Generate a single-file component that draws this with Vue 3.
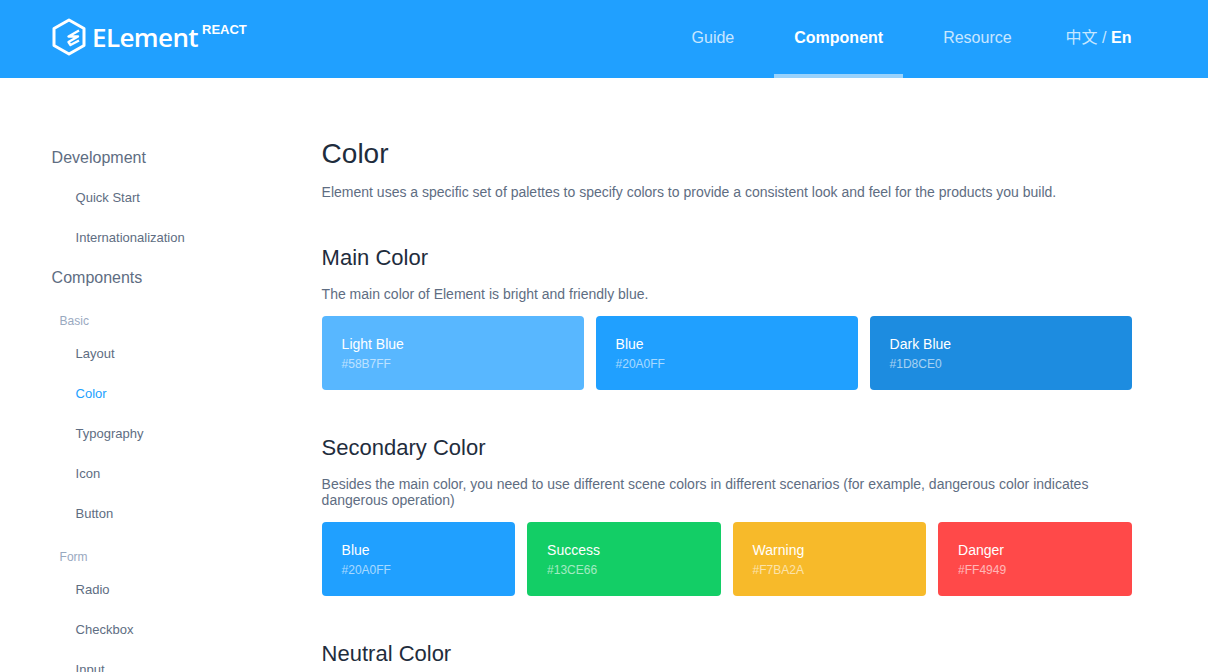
<template>
  <div class="page">
    <header class="header">
      <a class="logo">
        <svg class="logo-mark" width="34" height="38" viewBox="0 0 34 38" fill="none" stroke="#fff" stroke-width="3" stroke-linejoin="round">
          <path d="M17 2 L32 10.5 V27.5 L17 36 L2 27.5 V10.5 Z" />
          <path d="M27 12.5 L16.5 18.5 L26 18.5 L16.5 24 L18.5 27 L27 22.5" stroke-width="2.4" />
        </svg>
        <span class="logo-word">ELement</span>
        <span class="logo-sub">REACT</span>
      </a>
      <nav class="nav">
        <a v-for="item in navItems" :key="item" class="nav-item" :class="{ active: item === 'Component' }">{{ item }}</a>
        <span class="lang">中文 / <b>En</b></span>
      </nav>
    </header>

    <div class="body">
      <aside class="sidebar">
        <template v-for="section in menu" :key="section.title">
          <div class="menu-title">{{ section.title }}</div>
          <a v-for="link in section.links" :key="link" class="menu-link">{{ link }}</a>
          <template v-for="group in section.groups" :key="group.title">
            <div class="menu-group">{{ group.title }}</div>
            <a
              v-for="link in group.links"
              :key="link"
              class="menu-link"
              :class="{ active: link === 'Color' }"
            >{{ link }}</a>
          </template>
        </template>
      </aside>

      <main class="content">
        <h2>Color</h2>
        <p class="intro">Element uses a specific set of palettes to specify colors to provide a consistent look and feel for the products you build.</p>

        <h3>Main Color</h3>
        <p>The main color of Element is bright and friendly blue.</p>
        <div class="swatches three">
          <div v-for="c in mainColors" :key="c.name" class="swatch" :style="{ background: c.hex }">
            <div class="swatch-name">{{ c.name }}</div>
            <div class="swatch-hex">{{ c.hex }}</div>
          </div>
        </div>

        <h3>Secondary Color</h3>
        <p>Besides the main color, you need to use different scene colors in different scenarios (for example, dangerous color indicates dangerous operation)</p>
        <div class="swatches four">
          <div v-for="c in secondaryColors" :key="c.name" class="swatch" :style="{ background: c.hex }">
            <div class="swatch-name">{{ c.name }}</div>
            <div class="swatch-hex">{{ c.hex }}</div>
          </div>
        </div>

        <h3>Neutral Color</h3>
      </main>
    </div>
  </div>
</template>

<script setup>
const navItems = ['Guide', 'Component', 'Resource']

const menu = [
  { title: 'Development', links: ['Quick Start', 'Internationalization'], groups: [] },
  {
    title: 'Components',
    links: [],
    groups: [
      { title: 'Basic', links: ['Layout', 'Color', 'Typography', 'Icon', 'Button'] },
      { title: 'Form', links: ['Radio', 'Checkbox', 'Input'] }
    ]
  }
]

const mainColors = [
  { name: 'Light Blue', hex: '#58B7FF' },
  { name: 'Blue', hex: '#20A0FF' },
  { name: 'Dark Blue', hex: '#1D8CE0' }
]

const secondaryColors = [
  { name: 'Blue', hex: '#20A0FF' },
  { name: 'Success', hex: '#13CE66' },
  { name: 'Warning', hex: '#F7BA2A' },
  { name: 'Danger', hex: '#FF4949' }
]
</script>

<style>
html,
body {
  margin: 0;
  overflow: hidden;
}
</style>

<style scoped>
.page {
  height: 672px;
  overflow: hidden;
  background: #fff;
  font-family: "Liberation Sans", Arial, sans-serif;
  color: #5e6d82;
}

.header {
  height: 78px;
  background: #20a0ff;
  padding: 0 76.6px 0 52px;
  display: flex;
  justify-content: space-between;
}

.logo {
  display: flex;
  align-items: flex-start;
  color: #fff;
}

.logo-mark {
  margin-top: 18px;
}

.logo-word {
  width: 105px;
  margin: 19px 0 0 6px;
  font-family: "Open Sans", sans-serif;
  font-size: 26px;
  font-weight: 600;
  line-height: 36px;
  letter-spacing: -0.6px;
}

.logo-sub {
  margin: 22px 0 0 5px;
  font-size: 13px;
  line-height: 16px;
  font-weight: 700;
}

.nav {
  display: flex;
  gap: 20px;
  font-size: 16px;
  line-height: 76px;
  color: #fff;
}

.nav-item {
  height: 78px;
  box-sizing: border-box;
  padding: 0 20px;
  opacity: 0.75;
}

.nav-item.active {
  opacity: 1;
  font-weight: 700;
  border-bottom: 4px solid #99d2fc;
}

.lang {
  margin-left: 14px;
  color: #c7e7ff;
  font-family: "Liberation Sans", "Noto Sans CJK SC", sans-serif;
}

.lang b {
  color: #fff;
}

.body {
  display: flex;
  padding: 60px 76.4px 0 51.6px;
}

.sidebar {
  width: 270px;
  flex-shrink: 0;
  margin-top: -1px;
}

.menu-title {
  height: 40px;
  font-size: 16px;
  line-height: 42px;
  color: #5e6d82;
}

.menu-link {
  display: block;
  height: 40px;
  padding-left: 24px;
  font-size: 13px;
  line-height: 42px;
  color: #5e6d82;
}

.menu-link.active {
  color: #20a0ff;
}

.menu-group {
  height: 36px;
  padding: 12px 0 0 8px;
  box-sizing: border-box;
  font-size: 12px;
  line-height: 24px;
  color: #99a9bf;
}

.content {
  flex: 1;
  min-width: 0;
}

h2 {
  margin: 0;
  font-size: 28px;
  font-weight: 400;
  line-height: 32px;
  color: #1f2d3d;
}

h3 {
  margin: 0;
  padding-top: 45px;
  font-size: 22px;
  font-weight: 400;
  line-height: 26px;
  color: #1f2d3d;
}

p {
  margin: 15px 0 14px;
  font-size: 14px;
  line-height: 16px;
}

.intro {
  margin: 14px 0 0;
}

.swatches {
  display: grid;
  gap: 12px;
}

.three {
  grid-template-columns: repeat(3, 1fr);
}

.four {
  grid-template-columns: repeat(4, 1fr);
}

.swatch {
  height: 74px;
  box-sizing: border-box;
  padding: 20px 20px 0;
  border-radius: 4px;
  color: #fff;
}

.swatch-name {
  font-size: 14px;
  line-height: 16px;
}

.swatch-hex {
  margin-top: 4px;
  font-size: 12px;
  line-height: 16px;
  opacity: 0.6;
}
</style>
